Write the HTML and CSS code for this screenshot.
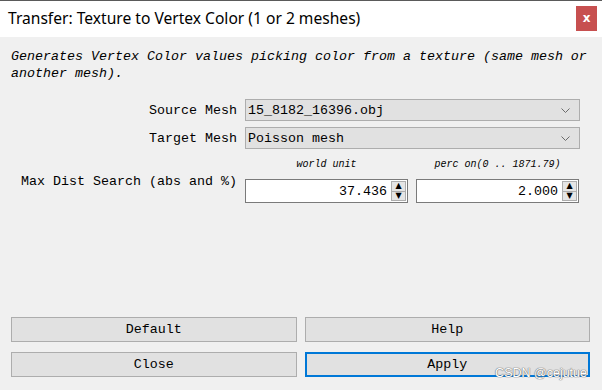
FILE: index.html
```html
<!DOCTYPE html>
<html lang="en">
  <head>
    <meta charset="UTF-8" />
    <meta name="viewport" content="width=device-width, initial-scale=1.0" />
    <title>Transfer: Texture to Vertex Color</title>
    <link rel="stylesheet" href="styles.css">
  </head>

  <body>
    <div class="window">
      <header class="titlebar">
        <span class="title">Transfer: Texture to Vertex Color (1 or 2 meshes)</span>
        <button class="close-x">x</button>
      </header>

      <main class="dialog">
        <p class="help">Generates Vertex Color values picking color from a texture (same mesh or another mesh).</p>

        <div class="form">
          <label>Source Mesh</label>
          <div class="combo">
            <span>15_8182_16396.obj</span>
            <svg width="9" height="5" viewBox="0 0 9 5"><polyline points="0.5,0.5 4.5,4.5 8.5,0.5" fill="none" stroke="#6b6b6b" stroke-width="1"/></svg>
          </div>

          <label>Target Mesh</label>
          <div class="combo">
            <span>Poisson mesh</span>
            <svg width="9" height="5" viewBox="0 0 9 5"><polyline points="0.5,0.5 4.5,4.5 8.5,0.5" fill="none" stroke="#6b6b6b" stroke-width="1"/></svg>
          </div>

          <label class="tall">Max Dist Search (abs and %)</label>
          <div class="pair">
            <div class="field">
              <span class="caption">world unit</span>
              <div class="spin">
                <span>37.436</span>
                <div class="arrows">
                  <div class="arrow">&#9650;</div>
                  <div class="arrow">&#9660;</div>
                </div>
              </div>
            </div>
            <div class="field">
              <span class="caption">perc on(0 .. 1871.79)</span>
              <div class="spin">
                <span>2.000</span>
                <div class="arrows">
                  <div class="arrow">&#9650;</div>
                  <div class="arrow">&#9660;</div>
                </div>
              </div>
            </div>
          </div>
        </div>

        <div class="buttons">
          <button>Default</button>
          <button>Help</button>
          <button>Close</button>
          <button class="active">Apply</button>
        </div>

        <span class="watermark">CSDN @cejutue</span>
      </main>
    </div>
  </body>
</html>
```

FILE: styles.css
```css
html,
body {
  margin: 0;
  height: 100%;
}
body {
  background-color: #f0f0f0;
  font-family: "Liberation Mono", "DejaVu Sans Mono", monospace;
  font-size: 13.33px;
  color: #000;
}
.window {
  display: flex;
  flex-direction: column;
  height: 100%;
  border-top: 1px solid #5a5a5a;
  box-sizing: border-box;
}
.titlebar {
  display: flex;
  align-items: center;
  justify-content: space-between;
  height: 36px;
  background-color: white;
  padding: 0 5px 0 8px;
}
.title {
  font-family: "Noto Sans", "Open Sans", sans-serif;
  font-size: 15.6px;
  color: #000;
  margin-top: -2px;
}
.close-x {
  width: 21px;
  height: 25px;
  margin-top: -2px;
  border: none;
  padding: 0;
  background-color: #c75050;
  color: white;
  font-family: "DejaVu Sans", sans-serif;
  font-weight: bold;
  font-size: 12px;
}
.dialog {
  position: relative;
  flex: 1;
  display: flex;
  flex-direction: column;
  padding: 11px 12px 13px 11px;
}
.help {
  margin: 0;
  font-style: italic;
  line-height: 17px;
}
.form {
  display: grid;
  grid-template-columns: 226px 335px;
  column-gap: 8px;
  row-gap: 6px;
  margin-top: 17px;
}
.form label {
  text-align: right;
  align-self: center;
}
.form label.tall {
  align-self: start;
  margin-top: 19px;
}
.combo {
  display: flex;
  align-items: center;
  justify-content: space-between;
  height: 22px;
  box-sizing: border-box;
  border: 1px solid #adadad;
  background-color: #e1e1e1;
  padding: 0 9px 0 2px;
}
.pair {
  display: flex;
  gap: 8px;
}
.field {
  display: flex;
  flex-direction: column;
  align-items: center;
  width: 163px;
}
.caption {
  font-style: italic;
  font-size: 10px;
  line-height: 14px;
  margin: 3px 0 7px;
}
.spin {
  display: flex;
  align-items: center;
  justify-content: flex-end;
  gap: 4px;
  width: 100%;
  height: 24px;
  box-sizing: border-box;
  border: 1px solid #7a7a7a;
  background-color: white;
  padding-right: 1px;
}
.arrows {
  display: flex;
  flex-direction: column;
  width: 15px;
  height: 20px;
  box-sizing: border-box;
  border: 1px solid #adadad;
  background-color: #e5e5e5;
}
.arrow {
  flex: 1;
  display: flex;
  align-items: center;
  justify-content: center;
  font-family: "DejaVu Sans", sans-serif;
  font-size: 8px;
  line-height: 1;
}
.arrow + .arrow {
  border-top: 1px solid #adadad;
}
.buttons {
  display: grid;
  grid-template-columns: 1fr 1fr;
  column-gap: 8px;
  row-gap: 10px;
  margin-top: auto;
}
.buttons button {
  height: 25px;
  font-family: inherit;
  font-size: 13.33px;
  color: #000;
  border: 1px solid #adadad;
  background-color: #e1e1e1;
  padding: 0;
}
.buttons button.active {
  border: 2px solid #0078d7;
}
.watermark {
  position: absolute;
  right: 15px;
  bottom: 10px;
  font-family: "Liberation Sans", Arial, sans-serif;
  font-size: 12.5px;
  color: white;
  text-shadow: 0 0 1px #777, 0 0 1px #777, 0 0 1px #777;
}
```
